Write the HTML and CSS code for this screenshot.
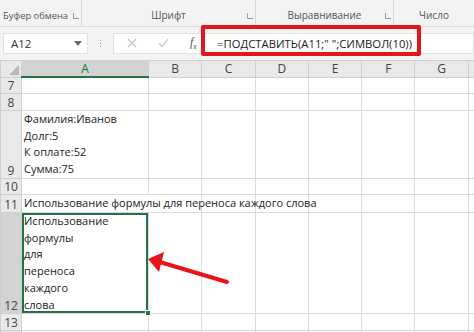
FILE: index.html
```html
<!DOCTYPE html>
<html lang="ru">
<head>
    <meta charset="UTF-8">
    <title>Excel - ПОДСТАВИТЬ</title>
    <link rel="stylesheet" href="styles.css">
</head>
<body>
    <!-- Ribbon group labels -->
    <div class="ribbon">
        <div class="group group-clip">Буфер обмена <span class="launcher"></span></div>
        <div class="group group-font">Шрифт <span class="launcher"></span></div>
        <div class="group group-align">Выравнивание <span class="launcher"></span></div>
        <div class="group group-num">Число</div>
    </div>

    <!-- Formula bar -->
    <div class="formula-bar">
        <div class="name-box">
            <span>A12</span>
            <svg class="caret" width="8" height="5" viewBox="0 0 8 5"><path d="M0 0h8L4 5z" fill="#6a6a6a"/></svg>
        </div>
        <div class="grip"><i></i><i></i><i></i></div>
        <div class="formula-input">
            <div class="fx-buttons">
                <svg width="10" height="10" viewBox="0 0 10 10"><path d="M1 1l8 8M9 1l-8 8" stroke="#c4c4c4" stroke-width="1.2"/></svg>
                <svg width="11" height="10" viewBox="0 0 11 10"><path d="M1 5.5l3 3L10 1" stroke="#c4c4c4" stroke-width="1.2" fill="none"/></svg>
                <span class="fx">f<sub>x</sub></span>
            </div>
            <div class="formula-text">=ПОДСТАВИТЬ(A11;" ";СИМВОЛ(10))</div>
        </div>
        <div class="highlight"></div>
    </div>

    <!-- Worksheet -->
    <div class="sheet">
        <table>
            <colgroup>
                <col class="c-head">
                <col class="c-a">
                <col class="c-n"><col class="c-n"><col class="c-n">
                <col class="c-n"><col class="c-n"><col class="c-n">
                <col class="c-n">
            </colgroup>
            <tr class="r-head">
                <th class="corner"><span class="tri"></span></th>
                <th class="active-col">A</th>
                <th>B</th><th>C</th><th>D</th><th>E</th><th>F</th><th>G</th><th></th>
            </tr>
            <tr>
                <th>7</th><td></td><td></td><td></td><td></td><td></td><td></td><td></td><td></td>
            </tr>
            <tr>
                <th>8</th><td></td><td></td><td></td><td></td><td></td><td></td><td></td><td></td>
            </tr>
            <tr class="r-9">
                <th>9</th>
                <td class="wrap">Фамилия:Иванов<br>Долг:5<br>К оплате:52<br>Сумма:75</td>
                <td></td><td></td><td></td><td></td><td></td><td></td><td></td>
            </tr>
            <tr>
                <th>10</th><td></td><td></td><td></td><td></td><td></td><td></td><td></td><td></td>
            </tr>
            <tr>
                <th>11</th><td class="overflow">Использование формулы для переноса каждого слова</td>
                <td class="no-left"></td><td class="no-left"></td><td class="no-left"></td><td></td><td></td><td></td><td></td>
            </tr>
            <tr class="r-12">
                <th class="active-row">12</th>
                <td class="wrap selected">Использование<br>формулы<br>для<br>переноса<br>каждого<br>слова<span class="handle"></span></td>
                <td></td><td></td><td></td><td></td><td></td><td></td><td></td>
            </tr>
            <tr>
                <th>13</th><td></td><td></td><td></td><td></td><td></td><td></td><td></td><td></td>
            </tr>
            <tr>
                <th></th><td></td><td></td><td></td><td></td><td></td><td></td><td></td><td></td>
            </tr>
        </table>

        <!-- annotation arrow -->
        <svg class="arrow" width="90" height="40" viewBox="0 0 90 40">
            <path d="M82 31L8 9" stroke="#e8141c" stroke-width="4" stroke-linecap="round"/>
            <path d="M3 8L19 1L14 21z" fill="#e8141c"/>
        </svg>
    </div>
</body>
</html>
```

FILE: styles.css
```css
:root {
    --ribbon-bg: #f3f3f3;
    --grid: #dadada;
    --head-bg: #e9e9e9;
    --head-active: #d3d3d3;
    --excel-green: #217346;
    --text: #222;
    --red: #e8141c;
    --font-family: "Open Sans", "Noto Sans", sans-serif;
}

* {
    box-sizing: border-box;
    margin: 0;
    padding: 0;
}

body {
    width: 474px;
    height: 332px;
    overflow: hidden;
    background: #fff;
    color: var(--text);
    font-family: var(--font-family);
}

/* Ribbon */
.ribbon {
    display: flex;
    height: 27px;
    background: var(--ribbon-bg);
    border-bottom: 1px solid #dcdcdc;
    font-size: 10px;
    color: #555;
}

.group {
    position: relative;
    display: flex;
    align-items: center;
    justify-content: center;
    padding-top: 4px;
    border-right: 1px solid #d6d6d6;
}

.group-clip { width: 82px; justify-content: flex-start; padding-left: 3px; font-size: 9.4px; }
.group-font { width: 174px; }
.group-align { width: 138px; }
.group-num { flex: 1; border-right: none; }

.launcher {
    position: absolute;
    right: 2px;
    top: 13px;
    width: 6px;
    height: 6px;
    border-left: 1px solid #9a9a9a;
    border-bottom: 1px solid #9a9a9a;
}

/* Formula bar */
.formula-bar {
    position: relative;
    display: flex;
    align-items: center;
    height: 33px;
    padding: 0 0 0 3px;
    background: var(--ribbon-bg);
}

.name-box {
    display: flex;
    align-items: center;
    justify-content: space-between;
    width: 85px;
    height: 21px;
    padding: 0 5px 0 7px;
    background: #fff;
    border: 1px solid #e2e2e2;
    font-size: 11.5px;
    color: #333;
}

.grip {
    display: flex;
    flex-direction: column;
    gap: 2px;
    width: 25px;
    align-items: center;
}

.grip i {
    width: 1px;
    height: 1px;
    background: #9c9c9c;
}

.formula-input {
    flex: 1;
    display: flex;
    align-items: center;
    height: 21px;
    background: #fff;
    border: 1px solid #e2e2e2;
}

.fx-buttons {
    display: flex;
    align-items: center;
    gap: 21px;
    padding-left: 13px;
    width: 103px;
}

.fx {
    font-family: "Liberation Serif", serif;
    font-style: italic;
    font-size: 12px;
    color: #555;
}

.fx sub { font-size: 8px; }

.formula-text {
    font-size: 11.3px;
    color: #222;
    white-space: nowrap;
}

.highlight {
    position: absolute;
    left: 201px;
    top: -2px;
    width: 220px;
    height: 31px;
    border: 4px solid var(--red);
    border-radius: 2px;
}

/* Sheet */
.sheet {
    position: relative;
    overflow: hidden;
    width: 474px;
}

table {
    table-layout: fixed;
    border-collapse: collapse;
    width: 480px;
    font-size: 11px;
}

.c-head { width: 21px; }
.c-a { width: 127px; }
.c-n { width: 53.3px; }

tr { height: 16.7px; }
.r-head { height: 16px; }
.r-9 { height: 67px; }
.r-12 { height: 100px; }

th {
    background: var(--head-bg);
    border: 1px solid #cfcfcf;
    font-weight: normal;
    font-size: 12px;
    color: #444;
    text-align: center;
    vertical-align: bottom;
    line-height: 15px;
}

.r-head th {
    vertical-align: middle;
}

td {
    border: 1px solid var(--grid);
    vertical-align: bottom;
    padding: 0 2px;
    line-height: 16.7px;
    white-space: nowrap;
}

.corner {
    position: relative;
}

.tri {
    position: absolute;
    right: 2px;
    bottom: 2px;
    border-left: 10px solid transparent;
    border-bottom: 10px solid #b9b9b9;
}

.active-col {
    background: var(--head-active);
    color: var(--excel-green);
    border-bottom: 2px solid var(--excel-green);
}

.active-row {
    background: var(--head-active);
}

.overflow {
    overflow: visible;
    border-right-color: transparent;
}

.no-left {
    border-left-color: transparent;
}

.selected {
    position: relative;
    box-shadow: inset 0 0 0 2px var(--excel-green);
}

.handle {
    position: absolute;
    right: -3px;
    bottom: -3px;
    width: 6px;
    height: 6px;
    background: var(--excel-green);
    border: 1px solid #fff;
}

.arrow {
    position: absolute;
    left: 145px;
    top: 191px;
}
```
